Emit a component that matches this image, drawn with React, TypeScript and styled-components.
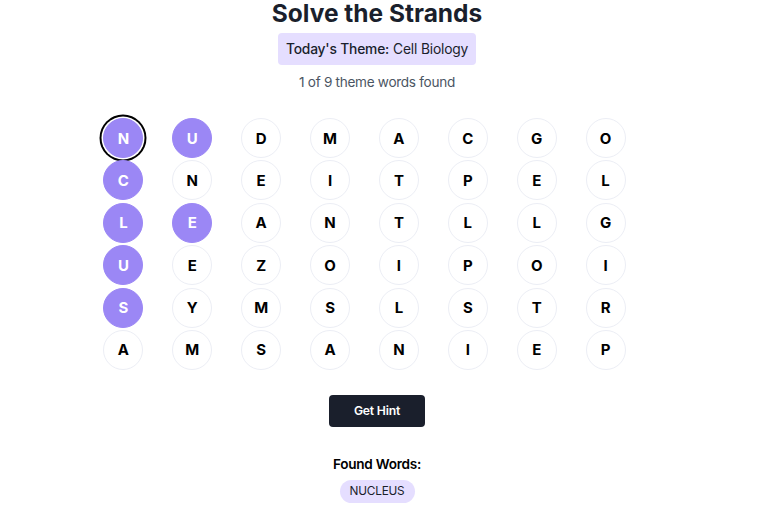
import styled, { createGlobalStyle } from "styled-components";

const GlobalStyle = createGlobalStyle`
    body {
        margin: 0;
        background: #ffffff;
        font-family: Inter, "Noto Sans", sans-serif;
        color: #1a1f2c;
    }
`

const grid = [
    "NUDMACGO",
    "CNEITPEL",
    "LEANTLLG",
    "UEZOIPOI",
    "SYMSLSTR",
    "AMSANIEP",
]

// cells that belong to the found word NUCLEUS
const found = new Set(["0-0", "0-1", "1-0", "2-0", "2-1", "3-0", "4-0"])
const active = "0-0"

export default function App() {
    return (
        <Page>
            <GlobalStyle/>
            <Title>Solve the Strands</Title>
            <Theme><b>Today's Theme:</b> Cell Biology</Theme>
            <Progress>1 of 9 theme words found</Progress>
            <BoardWrap>
                <Board>
                    {grid.map((row, r) => row.split("").map((letter, c) => {
                        const key = `${r}-${c}`
                        return <Cell key={key} $found={found.has(key)} $active={key === active}>
                            {letter}
                        </Cell>
                    }))}
                </Board>
            </BoardWrap>
            <HintButton>Get Hint</HintButton>
            <FoundTitle>Found Words:</FoundTitle>
            <WordList>
                <WordPill>NUCLEUS</WordPill>
            </WordList>
        </Page>
    )
}

const Page = styled.div`
    width: 754px;
    padding-top: 1px;
    display: flex;
    flex-direction: column;
    align-items: center;
`

const Title = styled.h1`
    margin: 0;
    font-size: 24.5px;
    line-height: 25px;
    font-weight: 700;
    color: #1a1f2c;
`

const Theme = styled.div`
    margin-top: 7px;
    background: #e5deff;
    border-radius: 4px;
    padding: 0 8px;
    height: 32px;
    display: flex;
    align-items: center;
    font-size: 13.8px;
    letter-spacing: -0.18px;
    color: #1a1f2c;

    b {
        font-weight: 500;
        margin-right: 4px;
    }
`

const Progress = styled.div`
    margin-top: 7px;
    font-size: 13.6px;
    letter-spacing: -0.3px;
    line-height: 20px;
    color: #4b5563;
`

const BoardWrap = styled.div`
    margin-top: 26px;
    padding-right: 25px;
`

const Board = styled.div`
    display: grid;
    grid-template-columns: repeat(8, 40px);
    grid-auto-rows: 40px;
    column-gap: 28.9px;
    row-gap: 2.4px;
`

const Cell = styled.div<{ $found: boolean; $active: boolean }>`
    width: 40px;
    height: 40px;
    border-radius: 50%;
    box-sizing: border-box;
    display: flex;
    align-items: center;
    justify-content: center;
    font-size: 15px;
    font-weight: 700;
    color: ${p => p.$found ? "#ffffff" : "#000000"};
    background: ${p => p.$found ? "#9b87f5" : "#ffffff"};
    border: 1px solid ${p => p.$found ? "#9b87f5" : "#eceef5"};
    box-shadow: ${p => p.$active ? "0 0 0 1.5px #ffffff, 0 0 0 3.5px #000000" : "none"};
`

const HintButton = styled.button`
    margin-top: 25px;
    width: 96px;
    height: 32px;
    border: none;
    border-radius: 4px;
    background: #1a1f2c;
    color: #ffffff;
    font-family: Inter, sans-serif;
    font-size: 12.2px;
    letter-spacing: -0.2px;
    font-weight: 600;
`

const FoundTitle = styled.div`
    margin-top: 29px;
    font-size: 13.6px;
    letter-spacing: -0.25px;
    line-height: 16px;
    font-weight: 600;
    color: #000000;
`

const WordList = styled.div`
    margin-top: 8px;
    display: flex;
    gap: 8px;
`

const WordPill = styled.div`
    background: #e5deff;
    border-radius: 999px;
    padding: 0 10px;
    height: 23px;
    display: flex;
    align-items: center;
    font-size: 11.8px;
    letter-spacing: -0.2px;
    color: #1a1f2c;
`
